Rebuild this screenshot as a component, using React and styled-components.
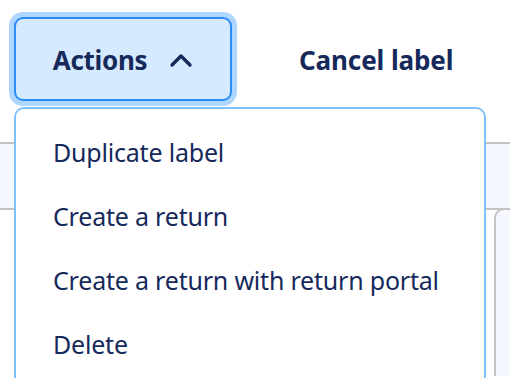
import styled, { createGlobalStyle } from "styled-components";

const GlobalStyle = createGlobalStyle`
  html, body {
    margin: 0;
    padding: 0;
    background: #ffffff;
  }
  * {
    box-sizing: border-box;
  }
`;

const Page = styled.div`
  position: relative;
  width: 510px;
  height: 378px;
  overflow: hidden;
  background: #ffffff;
  font-family: "Noto Sans", "Open Sans", sans-serif;
  color: #15295a;
`;

const Toolbar = styled.div`
  display: flex;
  align-items: flex-start;
  height: 142px;
  padding: 17px 0 0 14px;
`;

const Dropdown = styled.div`
  position: relative;
`;

const ActionsButton = styled.button`
  display: flex;
  align-items: center;
  justify-content: center;
  gap: 22px;
  width: 218px;
  height: 84px;
  padding: 2px 0 0;
  border: 2px solid #2a8df7;
  border-radius: 9px;
  background: #d5e9ff;
  box-shadow: 0 0 0 5px #afd6ff;
  font-family: inherit;
  font-size: 26px;
  font-weight: 700;
  color: #15295a;
  letter-spacing: -0.3px;
`;

const TextButton = styled.button`
  margin: 0 0 0 67px;
  height: 84px;
  padding: 2px 0 0;
  border: none;
  background: transparent;
  font-family: inherit;
  font-size: 26px;
  font-weight: 700;
  color: #15295a;
  letter-spacing: -0.1px;
`;

const Menu = styled.ul`
  position: absolute;
  top: 90px;
  left: 0;
  width: 472px;
  height: 300px;
  margin: 0;
  padding: 21px 0 0;
  list-style: none;
  background: #ffffff;
  border: 2px solid #7fc0ff;
  border-radius: 10px;
  z-index: 2;
`;

const MenuItem = styled.li`
  height: 64px;
  padding: 0 0 0 37px;
  font-size: 25px;
  font-weight: 400;
  line-height: 44px;
  letter-spacing: -0.2px;
  color: #15295a;
  white-space: nowrap;
`;

const HeaderBand = styled.div`
  height: 68px;
  background: #f4f8fe;
  border-top: 2px solid #c3c3c3;
  border-bottom: 2px solid #c3c3c3;
`;

const Content = styled.div`
  display: flex;
  justify-content: flex-end;
  height: 168px;
  margin-top: -2px;
`;

const Card = styled.div`
  width: 16px;
  height: 100%;
  background: #f4f8fe;
  border-top: 2px solid #c3c3c3;
  border-left: 2px solid #c3c3c3;
  border-top-left-radius: 10px;
`;

const Chevron = () => (
  <svg width="24" height="16" viewBox="0 0 24 16" fill="none">
    <path
      d="M3 13 L12 4 L21 13"
      stroke="#15295a"
      strokeWidth="3.4"
      strokeLinecap="round"
      strokeLinejoin="round"
    />
  </svg>
);

const items = [
  "Duplicate label",
  "Create a return",
  "Create a return with return portal",
  "Delete",
];

export default function App() {
  return (
    <Page>
      <GlobalStyle />
      <Toolbar>
        <Dropdown>
          <ActionsButton>
            Actions
            <Chevron />
          </ActionsButton>
          <Menu>
            {items.map((item) => (
              <MenuItem key={item}>{item}</MenuItem>
            ))}
          </Menu>
        </Dropdown>
        <TextButton>Cancel label</TextButton>
      </Toolbar>
      <HeaderBand />
      <Content>
        <Card />
      </Content>
    </Page>
  );
}
